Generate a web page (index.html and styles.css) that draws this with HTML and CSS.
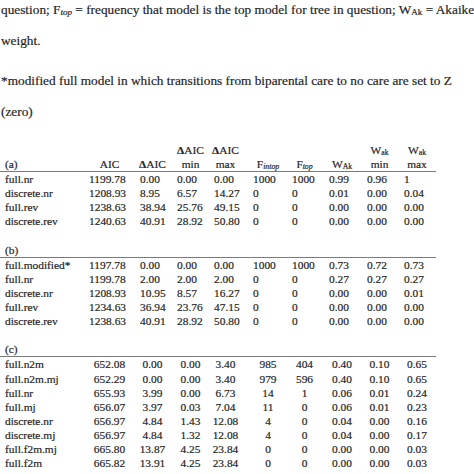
FILE: index.html
```html
<!DOCTYPE html>
<html>
<head>
<meta charset="utf-8">
<link rel="stylesheet" href="styles.css">
</head>
<body>
<p class="intro"><span class="line">question; F<i class="sub">top</i> = frequency that model is the top model for tree in question; W<span class="sub">Ak</span> = Akaike</span><span class="line">weight.</span></p>
<p class="note"><span class="line">*modified full model in which transitions from biparental care to no care are set to Z</span><span class="line">(zero)</span></p>

<div class="table">
  <div class="sec lft">
    <div class="row head"><span></span><span></span><span></span><span><b>Δ</b>AIC</span><span><b>Δ</b>AIC</span><span></span><span></span><span></span><span>W<span class="sub">ak</span></span><span>W<span class="sub">ak</span></span></div>
    <div class="row head rule"><span>(a)</span><span>AIC</span><span><b>Δ</b>AIC</span><span>min</span><span>max</span><span>F<i class="sub">intop</i></span><span>F<i class="sub">top</i></span><span>W<span class="sub">Ak</span></span><span>min</span><span>max</span></div>
    <div class="row"><span>full.nr</span><span>1199.78</span><span>0.00</span><span>0.00</span><span>0.00</span><span>1000</span><span>1000</span><span>0.99</span><span>0.96</span><span>1</span></div>
    <div class="row"><span>discrete.nr</span><span>1208.93</span><span>8.95</span><span>6.57</span><span>14.27</span><span>0</span><span>0</span><span>0.01</span><span>0.00</span><span>0.04</span></div>
    <div class="row"><span>full.rev</span><span>1238.63</span><span>38.94</span><span>25.76</span><span>49.15</span><span>0</span><span>0</span><span>0.00</span><span>0.00</span><span>0.00</span></div>
    <div class="row"><span>discrete.rev</span><span>1240.63</span><span>40.91</span><span>28.92</span><span>50.80</span><span>0</span><span>0</span><span>0.00</span><span>0.00</span><span>0.00</span></div>
  </div>

  <div class="sec lft">
    <div class="row rule"><span>(b)</span></div>
    <div class="row"><span>full.modified*</span><span>1197.78</span><span>0.00</span><span>0.00</span><span>0.00</span><span>1000</span><span>1000</span><span>0.73</span><span>0.72</span><span>0.73</span></div>
    <div class="row"><span>full.nr</span><span>1199.78</span><span>2.00</span><span>2.00</span><span>2.00</span><span>0</span><span>0</span><span>0.27</span><span>0.27</span><span>0.27</span></div>
    <div class="row"><span>discrete.nr</span><span>1208.93</span><span>10.95</span><span>8.57</span><span>16.27</span><span>0</span><span>0</span><span>0.00</span><span>0.00</span><span>0.01</span></div>
    <div class="row"><span>full.rev</span><span>1234.63</span><span>36.94</span><span>23.76</span><span>47.15</span><span>0</span><span>0</span><span>0.00</span><span>0.00</span><span>0.00</span></div>
    <div class="row"><span>discrete.rev</span><span>1238.63</span><span>40.91</span><span>28.92</span><span>50.80</span><span>0</span><span>0</span><span>0.00</span><span>0.00</span><span>0.00</span></div>
  </div>

  <div class="sec ctr">
    <div class="row rule"><span>(c)</span></div>
    <div class="row"><span>full.n2m</span><span>652.08</span><span>0.00</span><span>0.00</span><span>3.40</span><span>985</span><span>404</span><span>0.40</span><span>0.10</span><span>0.65</span></div>
    <div class="row"><span>full.n2m.mj</span><span>652.29</span><span>0.00</span><span>0.00</span><span>3.40</span><span>979</span><span>596</span><span>0.40</span><span>0.10</span><span>0.65</span></div>
    <div class="row"><span>full.nr</span><span>655.93</span><span>3.99</span><span>0.00</span><span>6.73</span><span>14</span><span>1</span><span>0.06</span><span>0.01</span><span>0.24</span></div>
    <div class="row"><span>full.mj</span><span>656.07</span><span>3.97</span><span>0.03</span><span>7.04</span><span>11</span><span>0</span><span>0.06</span><span>0.01</span><span>0.23</span></div>
    <div class="row"><span>discrete.nr</span><span>656.97</span><span>4.84</span><span>1.43</span><span>12.08</span><span>4</span><span>0</span><span>0.04</span><span>0.00</span><span>0.16</span></div>
    <div class="row"><span>discrete.mj</span><span>656.97</span><span>4.84</span><span>1.32</span><span>12.08</span><span>4</span><span>0</span><span>0.04</span><span>0.00</span><span>0.17</span></div>
    <div class="row"><span>full.f2m.mj</span><span>665.80</span><span>13.87</span><span>4.25</span><span>23.84</span><span>0</span><span>0</span><span>0.00</span><span>0.00</span><span>0.03</span></div>
    <div class="row"><span>full.f2m</span><span>665.82</span><span>13.91</span><span>4.25</span><span>23.84</span><span>0</span><span>0</span><span>0.00</span><span>0.00</span><span>0.03</span></div>
  </div>
</div>
</body>
</html>
```

FILE: styles.css
```css
html, body {
  margin: 0;
  padding: 0;
  background: #ffffff;
}
body {
  color: #262626;
  font-family: "Liberation Serif", "Times New Roman", serif;
  -webkit-text-stroke: 0.2px #262626;
  overflow: hidden;
}
.intro, .note {
  font-size: 13.3px;
  line-height: 30.5px;
  margin: 0;
  padding-left: 1px;
  white-space: nowrap;
}
.intro { margin-top: -5px; }
.note { margin-top: 10px; }
.line { display: block; }
.sub {
  font-size: 0.68em;
  line-height: 0;
  vertical-align: -1px;
}
.table {
  margin-top: 16px;
  width: 436px;
  font-size: 11.4px;
  line-height: 14.1px;
}
.sec + .sec { margin-top: 14.1px; }
.row {
  display: grid;
  grid-template-columns: 85px 49px 37px 37px 39px 39px 37px 38px 37px 38px;
}
.row > span {
  white-space: nowrap;
  min-height: 14.1px;
}
.rule { border-bottom: 1px solid #7a7a7a; }
.row > span:first-child {
  padding-left: 5px;
  text-align: left;
}
.lft .row > span { padding-left: 6px; }
.lft .row > span:nth-child(2) { padding-left: 4px; }
.lft .row > span:first-child { padding-left: 5px; }

.lft .row.head > span,
.ctr .row > span {
  padding-left: 0;
  text-align: center;
}
.lft .row.head > span:first-child,
.ctr .row > span:first-child {
  padding-left: 5px;
  text-align: left;
}
.lft .row.head > span:nth-child(4),
.ctr .row > span:nth-child(4) { padding-left: 2px; }
.lft .row.head > span:nth-child(5),
.ctr .row > span:nth-child(5) { padding-right: 4px; }
.lft .row.head > span:nth-child(6),
.ctr .row > span:nth-child(6) { padding-left: 3px; }
```
